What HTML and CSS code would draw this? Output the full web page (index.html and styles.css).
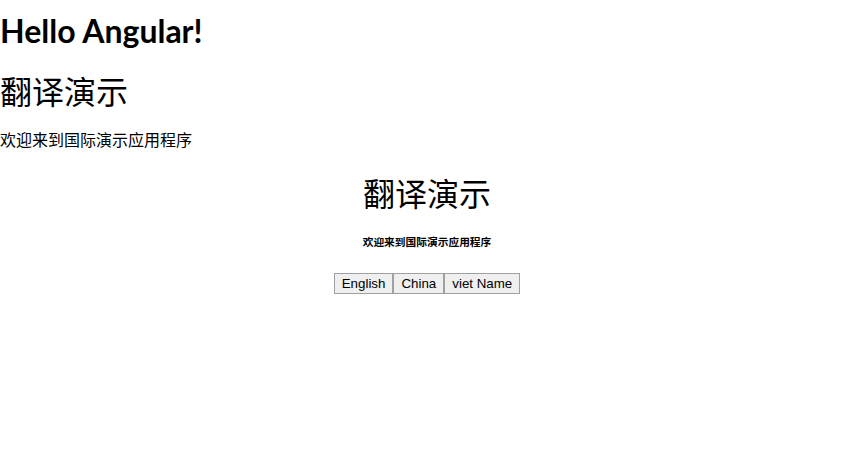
FILE: index.html
```html
<!DOCTYPE html>
<html>
<head>
<meta charset="utf-8">
<link rel="stylesheet" href="styles.css">
</head>
<body>
<h1 class="hello">Hello Angular!</h1>
<h1 class="title">翻译演示</h1>
<p class="intro">欢迎来到国际演示应用程序</p>
<div class="center">
<h1 class="title title-center">翻译演示</h1>
<h6 class="small">欢迎来到国际演示应用程序</h6>
<div class="langs"><button class="btn">English</button><button class="btn">China</button><button class="btn">viet Name</button></div>
</div>
</body>
</html>
```
FILE: styles.css
```css
body {
  margin: 0;
  font-family: "Liberation Serif", "Noto Sans CJK SC", serif;
  color: #000;
  background: #fff;
}
.hello {
  font-family: Lato, sans-serif;
  font-weight: 700;
  font-size: 32px;
  margin: 12px 0 0;
  line-height: 38px;
}
.title {
  font-size: 32px;
  font-weight: 400;
  margin: 17px 0 0;
}
.intro {
  font-family: "Noto Sans CJK SC", sans-serif;
  font-size: 16px;
  margin: 14px 0 0;
}
.center {
  text-align: center;
  padding-right: 8px;
}
.title-center {
  margin-top: 18px;
}
.small {
  font-family: "Noto Sans CJK SC", sans-serif;
  font-size: 10.72px;
  font-weight: 700;
  margin: 19px 0 0;
}
.langs {
  margin-top: 24px;
}
.btn {
  font-family: "Liberation Sans", Arial, sans-serif;
  font-size: 13.33px;
  margin: 0;
  padding: 1px 7px;
  border: 1px solid #a0a0a0;
  background: #efefef;
  border-radius: 0;
  height: 21px;
}
```
